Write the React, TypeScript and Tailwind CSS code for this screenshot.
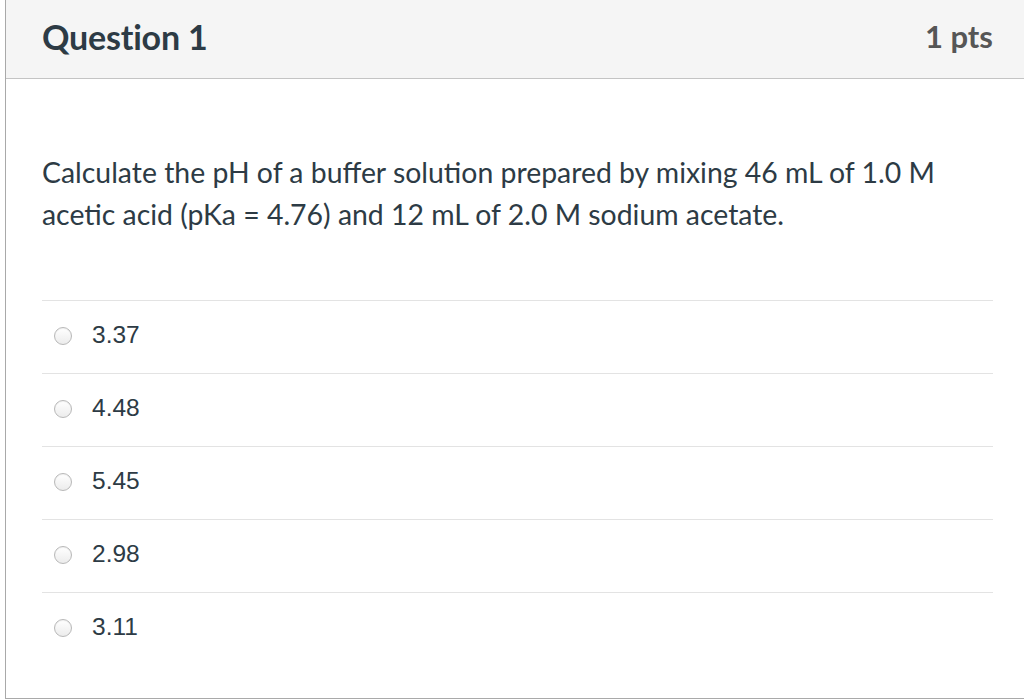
import React from 'react';

const answers = ['3.37', '4.48', '5.45', '2.98', '3.11'];

const App = () => {
  return (
    <div className="w-[1024px] h-[700px] overflow-hidden bg-white pl-[5px]">
      <div className="w-[1025px] h-[699px] border-l border-b border-[#a9a9a9] bg-white flex flex-col">
        {/* Header */}
        <div className="h-[79px] shrink-0 bg-[#f5f5f5] border-b border-[#c4c4c4] flex items-center justify-between pl-[36px] pr-[37px] pb-[5px]">
          <h2 className="text-[34px] font-bold text-[#2d3b45] font-['Lato',sans-serif] tracking-[-0.2px]">
            Question 1
          </h2>
          <div className="text-[31px] font-bold text-[#565656] font-['Lato',sans-serif]">1 pts</div>
        </div>

        {/* Body */}
        <div className="pl-[36px] pr-[37px] pt-[72px]">
          <p className="text-[28.4px] leading-[42px] text-[#2d3b45] font-['Lato',sans-serif] pr-[10px]">
            Calculate the pH of a buffer solution prepared by mixing 46 mL of 1.0 M acetic acid (pKa = 4.76) and 12 mL of 2.0 M sodium acetate.
          </p>

          <div className="mt-[65px]">
            {answers.map((a) => (
              <div key={a} className="h-[73px] border-t border-[#e3e3e3] flex items-center pl-[12px] pb-[3px]">
                <span className="w-[18px] h-[18px] rounded-full border border-[#b8b8b8] bg-gradient-to-b from-white to-[#ececec] shadow-[inset_0_1px_1px_rgba(0,0,0,0.06)]" />
                <span className="ml-[20px] text-[24.5px] text-[#2d3b45] font-['Liberation_Sans',Arial,sans-serif]">
                  {a}
                </span>
              </div>
            ))}
          </div>
        </div>
      </div>
    </div>
  );
};

export default App;
